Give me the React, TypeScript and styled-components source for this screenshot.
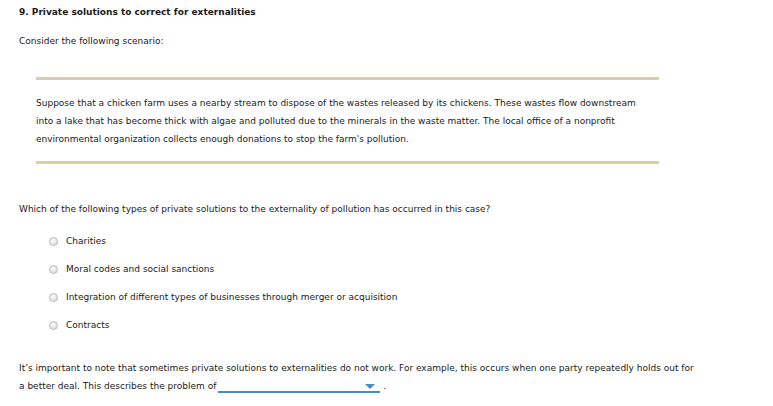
import styled, { createGlobalStyle } from "styled-components";

const GlobalStyle = createGlobalStyle`
  html, body {
    margin: 0;
    padding: 0;
    background: #ffffff;
  }
  body {
    font-family: "DejaVu Sans", Verdana, sans-serif;
    font-size: 9px;
    color: #1a1a1a;
  }
`;

const options = [
  "Charities",
  "Moral codes and social sanctions",
  "Integration of different types of businesses through merger or acquisition",
  "Contracts",
];

export default function App() {
  return (
    <>
      <GlobalStyle />
      <Page>
        <Title>9. Private solutions to correct for externalities</Title>
        <Text>Consider the following scenario:</Text>
        <Scenario>
          <ScenarioText>
            Suppose that a chicken farm uses a nearby stream to dispose of the wastes released by its
            chickens. These wastes flow downstream into a lake that has become thick with algae and
            polluted due to the minerals in the waste matter. The local office of a nonprofit
            environmental organization collects enough donations to stop the farm's pollution.
          </ScenarioText>
        </Scenario>
        <Question>
          Which of the following types of private solutions to the externality of pollution has
          occurred in this case?
        </Question>
        <OptionList>
          {options.map((label) => (
            <Option key={label}>
              <Radio />
              <span>{label}</span>
            </Option>
          ))}
        </OptionList>
        <Closing>
          It’s important to note that sometimes private solutions to externalities do not work. For
          example, this occurs when one party repeatedly holds out for a better deal. This describes
          the problem of
          <Dropdown>
            <Arrow />
          </Dropdown>
          .
        </Closing>
      </Page>
    </>
  );
}

const Page = styled.div`
  padding: 3px 19px 0 19px;
  line-height: 18px;
`;

const Title = styled.h2`
  margin: 0;
  font-size: 9px;
  font-weight: bold;
  line-height: 18px;
  color: #1a1a1a;
`;

const Text = styled.p`
  margin: 11px 0 0 0;
`;

const Scenario = styled.div`
  margin: 27px 0 0 17px;
  width: 623px;
  border-top: 3px solid #d9cfa6;
  border-bottom: 3px solid #d9cfa6;
  padding: 14px 0 13px 0;
`;

const ScenarioText = styled.p`
  margin: 0;
  width: 612px;
`;

const Question = styled.p`
  margin: 36px 0 0 0;
`;

const OptionList = styled.div`
  display: flex;
  flex-direction: column;
  gap: 10px;
  margin: 14px 0 0 30px;
`;

const Option = styled.label`
  display: flex;
  align-items: center;
  gap: 8px;
  height: 18px;
`;

const Radio = styled.span`
  width: 7px;
  height: 7px;
  border-radius: 50%;
  border: 1px solid #b9b9b9;
  background: radial-gradient(circle at 40% 35%, #fafafa 0%, #e2e2e2 70%, #d0d0d0 100%);
  flex-shrink: 0;
`;

const Closing = styled.p`
  margin: 25px 0 0 0;
  width: 680px;
`;

const Dropdown = styled.span`
  display: inline-block;
  position: relative;
  vertical-align: -4px;
  width: 162px;
  height: 14px;
  margin: 0 3px 0 2px;
  border-bottom: 2px solid #4a8ac7;
`;

const Arrow = styled.span`
  position: absolute;
  right: 5px;
  top: 7px;
  width: 0;
  height: 0;
  border-left: 5px solid transparent;
  border-right: 5px solid transparent;
  border-top: 5px solid #4a8ac7;
`;
